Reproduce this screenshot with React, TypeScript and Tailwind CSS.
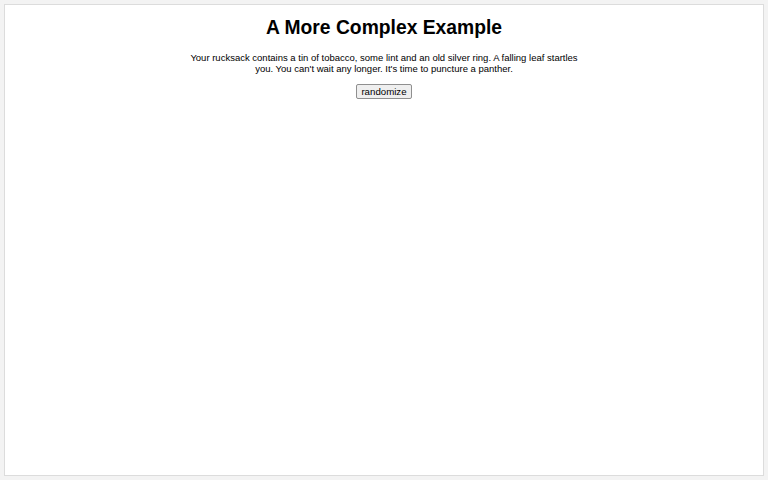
import React from 'react';

export default function App() {
    return (
        <div className="h-[480px] w-[768px] bg-[#f3f3f3] p-1" style={{ fontFamily: '"Liberation Sans", Arial, sans-serif' }}>
            <div className="flex h-full flex-col items-center border border-[#dcdcdc] bg-white">
                <h1 className="mt-[11px] text-[19.3px] font-bold leading-[24px] text-black">A More Complex Example</h1>
                <p className="mt-[12px] w-[396px] text-center text-[9.5px] leading-[11px] text-black">
                    Your rucksack contains a tin of tobacco, some lint and an old silver ring. A falling leaf startles you. You can't wait any longer. It's time to puncture a panther.
                </p>
                <button className="mt-[10px] h-[15px] rounded-[2px] border border-[#8f8f8f] bg-[#efefef] px-[4px] text-[9.7px] leading-[12px] text-black">
                    randomize
                </button>
            </div>
        </div>
    );
}
